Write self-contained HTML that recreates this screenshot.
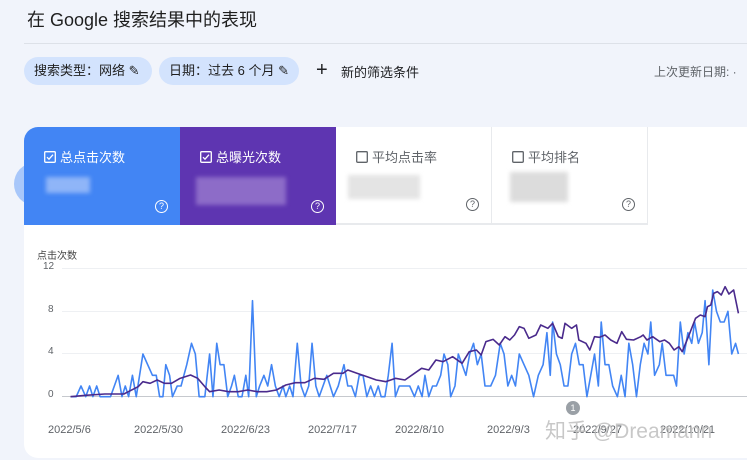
<!DOCTYPE html>
<html><head><meta charset="utf-8"><style>
*{margin:0;padding:0;box-sizing:border-box}
body{width:747px;height:460px;overflow:hidden;background:#f1f4fb;font-family:"Liberation Sans","Noto Sans CJK SC",sans-serif;position:relative;color:#202124}
.a{position:absolute;white-space:nowrap}
.chip{position:absolute;top:57px;height:28px;border-radius:14px;background:#d3e3fd;font-size:13px;line-height:28px;padding-left:10px;color:#1f1f1f}
.tile{position:absolute;top:127px;width:156px;height:98px;font-size:13px}
.cb{display:inline-block;width:12px;height:12px;vertical-align:-1px;margin-right:4px}
.q{position:absolute;right:12px;bottom:12px;width:13px;height:13px;border:1.3px solid currentColor;border-radius:50%;font-size:9px;line-height:10px;text-align:center}
.blur{position:absolute;filter:blur(2px)}
</style></head><body>
<div class="a" style="left:27px;top:6px;font-size:18px;color:#1f1f1f">在 Google 搜索结果中的表现</div>
<div class="a" style="left:24px;top:43px;width:723px;height:1px;background:#dde1e8"></div>
<div class="chip" style="left:24px;width:128px">搜索类型：网络 <span style="font-size:13px">✎</span></div>
<div class="chip" style="left:159px;width:140px">日期：过去 6 个月 <span>✎</span></div>
<div class="a" style="left:316px;top:59px;font-size:20px;line-height:22px">+</div>
<div class="a" style="left:341px;top:62px;font-size:13px">新的筛选条件</div>
<div class="a" style="left:654px;top:63px;font-size:12px;color:#5f6368">上次更新日期: ·</div>
<div class="a" style="left:14px;top:163px;width:40px;height:42px;border-radius:50%;background:#a8c7fa"></div>
<div class="a" style="left:24px;top:127px;width:723px;height:331px;background:#fff;border-radius:14px 0 0 14px"></div>
<div class="tile" style="left:24px;background:#4285f4;color:#fff;border-radius:14px 0 0 0"><div class="a" style="left:20px;top:20px"><svg class="cb" viewBox="0 0 12 12"><rect x="0.7" y="0.7" width="10.6" height="10.6" rx="1" fill="none" stroke="#fff" stroke-width="1.3"/><path d="M3 6.2l2 2 4-4.5" fill="none" stroke="#fff" stroke-width="1.3"/></svg>总点击次数</div>
<div class="blur" style="left:22px;top:50px;width:44px;height:16px;background:#8fb5f8"></div><div class="q">?</div></div>
<div class="tile" style="left:180px;background:#5e35b1;color:#fff"><div class="a" style="left:20px;top:20px"><svg class="cb" viewBox="0 0 12 12"><rect x="0.7" y="0.7" width="10.6" height="10.6" rx="1" fill="none" stroke="#fff" stroke-width="1.3"/><path d="M3 6.2l2 2 4-4.5" fill="none" stroke="#fff" stroke-width="1.3"/></svg>总曝光次数</div>
<div class="blur" style="left:16px;top:50px;width:90px;height:28px;background:#8d6cc8"></div><div class="q">?</div></div>
<div class="tile" style="left:336px;background:#fff;color:#5f6368;border-right:1px solid #e8eaed;border-bottom:2px solid #e8eaed"><div class="a" style="left:20px;top:20px"><svg class="cb" viewBox="0 0 12 12"><rect x="0.7" y="0.7" width="10.6" height="10.6" rx="1" fill="none" stroke="#5f6368" stroke-width="1.3"/></svg>平均点击率</div>
<div class="blur" style="left:12px;top:48px;width:72px;height:24px;background:#e4e4e4"></div><div class="q">?</div></div>
<div class="tile" style="left:492px;background:#fff;color:#5f6368;border-right:1px solid #e8eaed;border-bottom:2px solid #e8eaed"><div class="a" style="left:20px;top:20px"><svg class="cb" viewBox="0 0 12 12"><rect x="0.7" y="0.7" width="10.6" height="10.6" rx="1" fill="none" stroke="#5f6368" stroke-width="1.3"/></svg>平均排名</div>
<div class="blur" style="left:18px;top:45px;width:58px;height:30px;background:#dcdcdc"></div><div class="q">?</div></div>
<div class="a" style="left:37px;top:247px;font-size:10px;color:#444">点击次数</div>
<div class="a" style="left:43px;top:261px;font-size:10px;color:#5f6368">12</div>
<div class="a" style="left:48px;top:304px;font-size:10px;color:#5f6368">8</div>
<div class="a" style="left:48px;top:346px;font-size:10px;color:#5f6368">4</div>
<div class="a" style="left:48px;top:389px;font-size:10px;color:#5f6368">0</div>
<div class="a" style="left:62px;top:268px;width:685px;height:1px;background:#eef0f3"></div>
<div class="a" style="left:62px;top:311px;width:685px;height:1px;background:#eef0f3"></div>
<div class="a" style="left:62px;top:353px;width:685px;height:1px;background:#eef0f3"></div>
<div class="a" style="left:62px;top:396px;width:685px;height:1px;background:#c6c9ce"></div>
<svg class="a" style="left:0;top:240px" width="747" height="220" viewBox="0 0 1568 660" preserveAspectRatio="none">
<polyline fill="none" stroke="#4285f4" stroke-width="1.6" vector-effect="non-scaling-stroke" stroke-linejoin="round" points="148,470 160,470 170,438 180,470 188,438 195,470 203,438 210,470 220,470 232,470 240,438 248,406 256,470 263,438 270,470 278,406 286,470 300,342 310,374 320,406 328,406 335,470 342,470 348,374 356,406 362,470 372,438 380,438 392,374 402,310 410,342 418,470 430,470 440,342 447,470 455,310 462,374 470,374 478,470 486,438 492,406 500,470 508,470 516,406 522,470 530,182 538,470 545,438 554,406 562,438 570,374 578,438 586,470 594,438 600,470 608,438 615,470 624,310 632,438 640,470 648,438 655,310 663,438 670,470 678,438 686,406 693,438 700,470 710,438 722,374 730,438 738,438 746,470 754,406 762,406 770,470 778,438 786,470 794,438 800,470 808,470 815,406 823,310 830,470 838,438 850,438 860,438 870,470 878,438 886,470 892,406 900,470 908,438 916,438 925,406 932,342 940,374 946,470 955,438 962,342 970,374 978,406 986,342 994,310 1002,374 1010,342 1018,438 1030,438 1040,406 1050,310 1058,342 1066,438 1074,406 1082,438 1090,342 1100,374 1110,406 1120,470 1130,406 1140,374 1148,278 1155,406 1160,246 1168,342 1176,374 1184,438 1192,438 1200,342 1208,310 1216,374 1224,374 1232,470 1240,406 1248,342 1256,438 1262,246 1270,374 1278,374 1286,438 1296,470 1304,406 1312,470 1320,310 1328,374 1336,470 1344,374 1352,310 1360,342 1366,246 1374,406 1384,374 1390,310 1398,406 1408,406 1414,406 1420,438 1428,246 1436,342 1444,278 1452,310 1458,246 1466,310 1474,278 1480,182 1488,374 1496,150 1504,214 1512,246 1520,246 1528,214 1536,342 1544,310 1550,342"/>
<polyline fill="none" stroke="#4a2a8c" stroke-width="1.6" vector-effect="non-scaling-stroke" stroke-linejoin="round" points="148,470 180,466 220,462 260,462 290,440 300,425 315,430 330,420 345,430 360,430 378,415 400,405 415,415 430,440 440,455 460,450 480,455 500,455 520,450 540,455 560,455 580,450 600,435 620,428 640,428 660,415 680,418 700,400 720,400 730,390 750,400 770,410 790,420 810,425 830,415 850,420 870,400 885,385 900,390 915,360 930,365 950,350 970,370 985,335 1000,330 1010,345 1020,305 1035,298 1048,315 1060,290 1070,300 1080,285 1090,260 1100,265 1110,295 1125,285 1135,255 1150,265 1160,250 1172,290 1180,295 1186,250 1200,265 1210,255 1215,300 1230,310 1238,330 1248,290 1258,292 1270,285 1282,300 1295,310 1305,275 1315,298 1330,300 1345,290 1350,285 1358,300 1370,290 1385,305 1395,300 1405,310 1415,330 1425,320 1432,335 1445,290 1460,235 1470,225 1480,230 1485,200 1492,195 1498,160 1506,155 1514,165 1522,140 1530,162 1540,150 1550,220"/>
</svg>
<div class="a" style="left:566px;top:401px;width:14px;height:14px;border-radius:50%;background:#9aa0a6;color:#fff;font-size:9px;line-height:14px;text-align:center">1</div>
<div class="a" style="top:424px;font-size:11px;color:#5f6368;left:48px">2022/5/6</div>
<div class="a" style="top:424px;font-size:11px;color:#5f6368;left:134px">2022/5/30</div>
<div class="a" style="top:424px;font-size:11px;color:#5f6368;left:221px">2022/6/23</div>
<div class="a" style="top:424px;font-size:11px;color:#5f6368;left:308px">2022/7/17</div>
<div class="a" style="top:424px;font-size:11px;color:#5f6368;left:395px">2022/8/10</div>
<div class="a" style="top:424px;font-size:11px;color:#5f6368;left:487px">2022/9/3</div>
<div class="a" style="top:424px;font-size:11px;color:#5f6368;left:573px">2022/9/27</div>
<div class="a" style="top:424px;font-size:11px;color:#5f6368;left:660px">2022/10/21</div>
<div class="a" style="top:415px;left:545px;font-size:21px;color:rgba(190,190,190,0.85)">知乎 @Dreamann</div>
</body></html>
